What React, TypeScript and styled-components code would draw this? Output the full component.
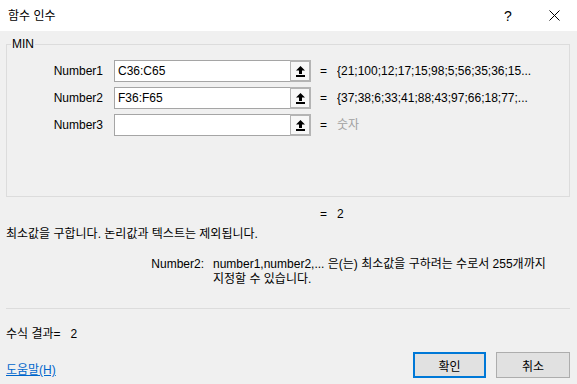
import styled, { createGlobalStyle } from "styled-components";

const GlobalStyle = createGlobalStyle`
  html, body {
    margin: 0;
    padding: 0;
  }
  body {
    font-family: "Liberation Sans", "Noto Sans CJK KR", sans-serif;
    font-size: 12px;
    color: #000;
  }
`;

const Dialog = styled.div`
  width: 577px;
  height: 384px;
  background: #f0f0f0;
  display: flex;
  flex-direction: column;
  overflow: hidden;
`;

const TitleBar = styled.div`
  height: 31px;
  flex: none;
  background: #fff;
  display: flex;
  align-items: center;
  padding-left: 8px;
`;

const Title = styled.div`
  flex: 1;
  line-height: 16px;
`;

const CaptionButton = styled.div`
  width: 46px;
  height: 31px;
  display: flex;
  align-items: center;
  justify-content: center;
  font-size: 14px;
`;

const Body = styled.div`
  flex: 1;
  display: flex;
  flex-direction: column;
  padding: 13px 7px 6px 6px;
`;

const GroupBox = styled.div`
  position: relative;
  height: 153px;
  box-sizing: border-box;
  border: 1px solid #dcdcdc;
  padding-top: 15px;
  display: flex;
  flex-direction: column;
  gap: 5px;
`;

const Legend = styled.span`
  position: absolute;
  top: -9px;
  left: 4px;
  padding: 0 1px;
  line-height: 16px;
  background: #f0f0f0;
`;

const ArgRow = styled.div`
  display: grid;
  grid-template-columns: 98px 197px 8px 1fr;
  column-gap: 9px;
  align-items: center;
  height: 22px;
`;

const ArgLabel = styled.div`
  text-align: right;
  padding-right: 2px;
`;

const RefField = styled.div`
  display: flex;
  height: 22px;
  box-sizing: border-box;
  border: 1px solid #a5a5a5;
  background: #fff;
`;

const RefInput = styled.input`
  flex: 1;
  min-width: 0;
  border: none;
  outline: none;
  background: #fff;
  padding: 0 3px;
  font: inherit;
  color: #000;
`;

const RefButton = styled.div`
  width: 21px;
  margin: -1px -1px -1px 0;
  box-sizing: border-box;
  border: 2px solid #b4b4b4;
  border-left-width: 1px;
  background: #f7f7f7;
  display: flex;
  align-items: center;
  justify-content: center;
`;

const Equals = styled.span`
  line-height: 16px;
`;

const ArgValue = styled.span<{ $placeholder?: boolean }>`
  white-space: nowrap;
  overflow: hidden;
  color: ${(p) => (p.$placeholder ? "#a0a0a0" : "#000")};
  line-height: 16px;
`;

const ResultLine = styled(ArgRow)`
  height: 16px;
  margin-top: 9px;
  padding-left: 1px;
`;

const Description = styled.div`
  margin-top: 4px;
  line-height: 16px;
`;

const HelpBlock = styled.div`
  display: flex;
  margin-top: 15px;
  line-height: 15px;
`;

const HelpLabel = styled.div`
  width: 198px;
  flex: none;
  text-align: right;
`;

const HelpText = styled.div`
  width: 358px;
  margin-left: 9px;
  word-break: keep-all;
`;

const Separator = styled.div`
  height: 1px;
  background: #dcdcdc;
  margin-top: 21px;
`;

const FormulaResult = styled.div`
  margin-top: 17px;
  line-height: 16px;
`;

const ResultValue = styled.span`
  margin-left: 10px;
`;

const Footer = styled.div`
  margin-top: auto;
  display: flex;
  align-items: flex-end;
  gap: 10px;
`;

const HelpLink = styled.a`
  flex: 1;
  color: #0066cc;
  text-decoration: underline;
  line-height: 16px;
  cursor: pointer;
`;

const DialogButton = styled.button<{ $primary?: boolean }>`
  width: ${(p) => (p.$primary ? "73px" : "74px")};
  height: 26px;
  box-sizing: border-box;
  background: #e1e1e1;
  border: ${(p) => (p.$primary ? "2px solid #0078d7" : "1px solid #adadad")};
  font: inherit;
  color: #000;
  padding: 0;
`;

const UploadIcon = () => (
  <svg width="9" height="11" viewBox="0 0 9 11">
    <path d="M4.5 0 L9 4.5 H6 V8 H3 V4.5 H0 Z" fill="#000" />
    <rect x="0" y="9" width="9" height="2" fill="#000" />
  </svg>
);

const CloseIcon = () => (
  <svg width="11" height="11" viewBox="0 0 11 11">
    <path d="M0.5 0.5 L10.5 10.5 M10.5 0.5 L0.5 10.5" stroke="#000" strokeWidth="1" />
  </svg>
);

const args = [
  { name: "Number1", ref: "C36:C65", value: "{21;100;12;17;15;98;5;56;35;36;15..." },
  { name: "Number2", ref: "F36:F65", value: "{37;38;6;33;41;88;43;97;66;18;77;..." },
  { name: "Number3", ref: "", value: "" },
];

export default function App() {
  return (
    <>
      <GlobalStyle />
      <Dialog>
        <TitleBar>
          <Title>함수 인수</Title>
          <CaptionButton>?</CaptionButton>
          <CaptionButton>
            <CloseIcon />
          </CaptionButton>
        </TitleBar>
        <Body>
          <GroupBox>
            <Legend>MIN</Legend>
            {args.map((a) => (
              <ArgRow key={a.name}>
                <ArgLabel>{a.name}</ArgLabel>
                <RefField>
                  <RefInput defaultValue={a.ref} />
                  <RefButton>
                    <UploadIcon />
                  </RefButton>
                </RefField>
                <Equals>=</Equals>
                {a.value ? (
                  <ArgValue>{a.value}</ArgValue>
                ) : (
                  <ArgValue $placeholder>숫자</ArgValue>
                )}
              </ArgRow>
            ))}
          </GroupBox>
          <ResultLine>
            <span />
            <span />
            <Equals>=</Equals>
            <ArgValue>2</ArgValue>
          </ResultLine>
          <Description>최소값을 구합니다. 논리값과 텍스트는 제외됩니다.</Description>
          <HelpBlock>
            <HelpLabel>Number2:</HelpLabel>
            <HelpText>
              number1,number2,... 은(는) 최소값을 구하려는 수로서 255개까지 지정할 수 있습니다.
            </HelpText>
          </HelpBlock>
          <Separator />
          <FormulaResult>
            수식 결과=<ResultValue>2</ResultValue>
          </FormulaResult>
          <Footer>
            <HelpLink>도움말(H)</HelpLink>
            <DialogButton $primary>확인</DialogButton>
            <DialogButton>취소</DialogButton>
          </Footer>
        </Body>
      </Dialog>
    </>
  );
}
